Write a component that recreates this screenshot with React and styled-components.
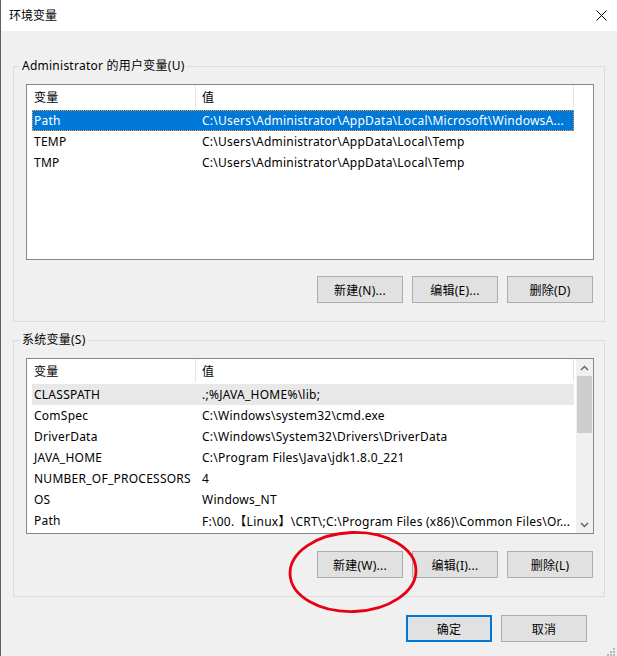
import styled, { createGlobalStyle } from 'styled-components'

const GlobalStyle = createGlobalStyle`
  html, body {
    margin: 0;
    padding: 0;
    background: #f0f0f0;
  }
  body {
    font-family: 'Noto Sans', 'Noto Sans CJK SC', sans-serif;
    font-size: 12px;
    letter-spacing: 0.25px;
    color: #000;
  }
`

const Window = styled.div`
  position: relative;
  width: 617px;
  height: 656px;
  box-sizing: border-box;
  border-left: 1px solid #5f5f5f;
  background: #f0f0f0;
  display: flex;
  flex-direction: column;
  overflow: hidden;
`

const TitleBar = styled.div`
  height: 31px;
  flex-shrink: 0;
  display: flex;
  align-items: center;
  justify-content: space-between;
  padding: 0 10px 0 8px;
  background: #fff;
`

const Title = styled.span`
  font-size: 12px;
  line-height: 16px;
  letter-spacing: 0;
`

const CloseIcon = styled.svg`
  display: block;
`

const Body = styled.div`
  display: flex;
  flex-direction: column;
  padding: 27px 12px 0 12px;
`

const Group = styled.fieldset`
  margin: ${({ $first }) => ($first ? '0' : '10px 0 0')};
  padding: 0 11px 18px 12px;
  border: 1px solid #dcdcdc;
  min-width: 0;
  display: flex;
  flex-direction: column;
`

const Legend = styled.legend`
  margin-left: -6px;
  padding: 0 2px;
  font-size: 12px;
  line-height: 16px;
`

const ListView = styled.div`
  margin-top: 10px;
  margin-right: -1px;
  height: 176px;
  box-sizing: border-box;
  border: 1px solid #828790;
  background: #fff;
  display: flex;
`

const ListBody = styled.div`
  flex: 1;
  min-width: 0;
  padding-left: 5px;
  display: flex;
  flex-direction: column;
`

const HeaderRow = styled.div`
  height: 25px;
  display: flex;
  align-items: stretch;
`

const HeaderCell = styled.div`
  width: ${({ $w }) => $w}px;
  box-sizing: border-box;
  display: flex;
  align-items: center;
  padding-left: ${({ $pad }) => $pad}px;
  border-right: 1px solid #e5e5e5;
  margin-bottom: 2px;
`

const Row = styled.div`
  height: 21px;
  width: 542px;
  box-sizing: border-box;
  display: flex;
  align-items: center;
  background: ${({ $state }) =>
    $state === 'selected' ? '#0078d7' : $state === 'muted' ? '#e8e8e8' : 'transparent'};
  color: ${({ $state }) => ($state === 'selected' ? '#fff' : '#000')};
  outline: ${({ $state }) => ($state === 'selected' ? '1px dotted #f0a040' : 'none')};
  outline-offset: -1px;
`

const Cell = styled.div`
  width: ${({ $w }) => $w}px;
  box-sizing: border-box;
  padding-left: ${({ $pad }) => $pad}px;
  white-space: nowrap;
  overflow: hidden;
`

const ScrollBar = styled.div`
  width: 17px;
  flex-shrink: 0;
  background: #f0f0f0;
  display: flex;
  flex-direction: column;
`

const ScrollArrow = styled.div`
  height: 17px;
  display: flex;
  align-items: center;
  justify-content: center;
`

const ScrollTrack = styled.div`
  flex: 1;
  padding: 0 1px;
`

const ScrollThumb = styled.div`
  height: 57px;
  background: #cdcdcd;
`

const ButtonRow = styled.div`
  margin-top: ${({ $top }) => $top}px;
  display: flex;
  justify-content: flex-end;
  gap: ${({ $gap }) => $gap}px;
  padding-right: ${({ $right }) => $right || 0}px;
`

const Button = styled.button`
  width: 86px;
  height: 27px;
  box-sizing: border-box;
  padding: 0;
  font-family: 'Noto Sans', 'Noto Sans CJK SC', sans-serif;
  font-size: 12px;
  letter-spacing: 0.25px;
  color: #000;
  background: #e1e1e1;
  border: ${({ $primary }) => ($primary ? '2px solid #0078d7' : '1px solid #adadad')};
  border-radius: 0;
`

const Annotation = styled.svg`
  position: absolute;
  left: 284px;
  top: 528px;
  pointer-events: none;
`

const Grip = styled.svg`
  position: absolute;
  right: 1px;
  bottom: 0;
`

const COLS = [164, 378]

const userVars = [
  ['Path', 'C:\\Users\\Administrator\\AppData\\Local\\Microsoft\\WindowsA...', 'selected'],
  ['TEMP', 'C:\\Users\\Administrator\\AppData\\Local\\Temp'],
  ['TMP', 'C:\\Users\\Administrator\\AppData\\Local\\Temp'],
]

const sysVars = [
  ['CLASSPATH', '.;%JAVA_HOME%\\lib;', 'muted'],
  ['ComSpec', 'C:\\Windows\\system32\\cmd.exe'],
  ['DriverData', 'C:\\Windows\\System32\\Drivers\\DriverData'],
  ['JAVA_HOME', 'C:\\Program Files\\Java\\jdk1.8.0_221'],
  ['NUMBER_OF_PROCESSORS', '4'],
  ['OS', 'Windows_NT'],
  ['Path', 'F:\\00.【Linux】\\CRT\\;C:\\Program Files (x86)\\Common Files\\Or...'],
]

const Chevron = ({ up }) => (
  <svg width="9" height="6" viewBox="0 0 9 6">
    <path
      d={up ? 'M1 5 L4.5 1.5 L8 5' : 'M1 1 L4.5 4.5 L8 1'}
      fill="none"
      stroke="#606060"
      strokeWidth="1.4"
    />
  </svg>
)

const VarList = ({ rows, scroll }) => (
  <ListView>
    <ListBody>
      <HeaderRow>
        <HeaderCell $w={COLS[0]} $pad={2}>变量</HeaderCell>
        <HeaderCell $w={COLS[1]} $pad={6}>值</HeaderCell>
      </HeaderRow>
      {rows.map(([name, value, state]) => (
        <Row key={name} $state={state}>
          <Cell $w={COLS[0]} $pad={2}>{name}</Cell>
          <Cell $w={COLS[1]} $pad={6}>{value}</Cell>
        </Row>
      ))}
    </ListBody>
    {scroll && (
      <ScrollBar>
        <ScrollArrow>
          <Chevron up />
        </ScrollArrow>
        <ScrollTrack>
          <ScrollThumb />
        </ScrollTrack>
        <ScrollArrow>
          <Chevron />
        </ScrollArrow>
      </ScrollBar>
    )}
  </ListView>
)

export default function App() {
  return (
    <>
      <GlobalStyle />
      <Window>
        <TitleBar>
          <Title>环境变量</Title>
          <CloseIcon width="11" height="11" viewBox="0 0 11 11">
            <path d="M0.5 0.5 L10.5 10.5 M10.5 0.5 L0.5 10.5" stroke="#000" strokeWidth="1" />
          </CloseIcon>
        </TitleBar>

        <Body>
          <Group $first>
            <Legend>Administrator 的用户变量(U)</Legend>
            <VarList rows={userVars} />
            <ButtonRow $top={16} $gap={9}>
              <Button type="button">新建(N)...</Button>
              <Button type="button">编辑(E)...</Button>
              <Button type="button">删除(D)</Button>
            </ButtonRow>
          </Group>

          <Group>
            <Legend>系统变量(S)</Legend>
            <VarList rows={sysVars} scroll />
            <ButtonRow $top={17} $gap={9}>
              <Button type="button">新建(W)...</Button>
              <Button type="button">编辑(I)...</Button>
              <Button type="button">删除(L)</Button>
            </ButtonRow>
          </Group>

          <ButtonRow $top={18} $gap={9} $right={18}>
            <Button type="button" $primary>确定</Button>
            <Button type="button">取消</Button>
          </ButtonRow>
        </Body>

        <Annotation width="136" height="90" viewBox="0 0 136 90">
          <ellipse
            cx="68"
            cy="44"
            rx="63"
            ry="39.5"
            fill="none"
            stroke="#e60012"
            strokeWidth="2.8"
            transform="rotate(-2 68 44)"
          />
        </Annotation>

        <Grip width="10" height="8" viewBox="0 0 10 8">
          <rect x="7" y="0" width="2" height="2" fill="#b8b8b8" />
          <rect x="4" y="3" width="2" height="2" fill="#b8b8b8" />
          <rect x="7" y="3" width="2" height="2" fill="#b8b8b8" />
          <rect x="1" y="6" width="2" height="2" fill="#b8b8b8" />
          <rect x="4" y="6" width="2" height="2" fill="#b8b8b8" />
          <rect x="7" y="6" width="2" height="2" fill="#b8b8b8" />
        </Grip>
      </Window>
    </>
  )
}
